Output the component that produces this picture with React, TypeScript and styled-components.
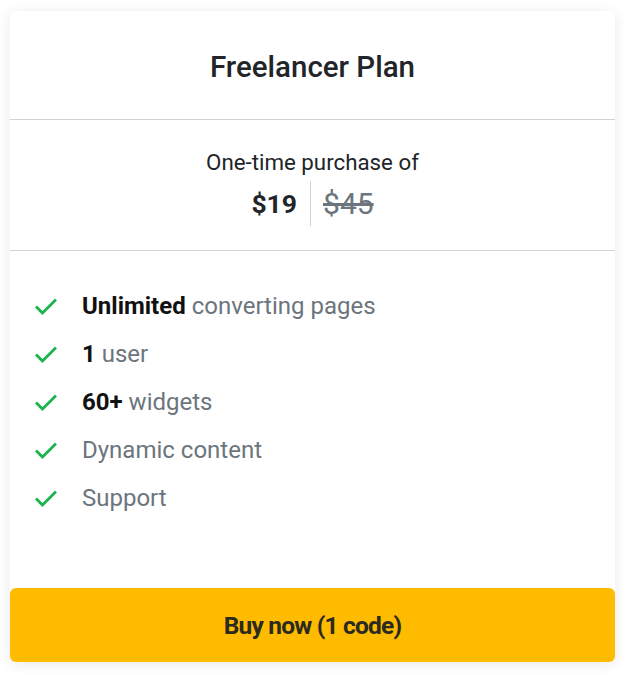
import React from "react";
import styled, { createGlobalStyle } from "styled-components";

const Global = createGlobalStyle`
  html, body { margin: 0; padding: 0; background: #ffffff; }
  body { font-family: Roboto, "Noto Sans", Arial, sans-serif; }
`;

const Page = styled.div`
  padding: 11px 12px 13px 10px;
`;

const Card = styled.div`
  background: #fff;
  border-radius: 6px;
  box-shadow: 0 2px 14px rgba(0, 0, 0, 0.09);
  display: flex;
  flex-direction: column;
  height: 651px;
`;

const Header = styled.div`
  height: 108px;
  display: flex;
  align-items: center;
  justify-content: center;
  border-bottom: 1px solid #d3d3d3;
`;

const Title = styled.h2`
  margin: 0;
  font-size: 29.5px;
  font-weight: 500;
  color: #212529;
  padding-top: 3px;
`;

const PriceBox = styled.div`
  height: 131px;
  display: flex;
  flex-direction: column;
  align-items: center;
  border-bottom: 1px solid #d3d3d3;
  box-sizing: border-box;
  padding-top: 29px;
`;

const Lead = styled.div`
  font-size: 22.3px;
  color: #212529;
  line-height: 26px;
`;

const PriceRow = styled.div`
  display: flex;
  align-items: center;
  margin-top: 6px;
`;

const Current = styled.span`
  font-size: 26.5px;
  font-weight: 700;
  color: #212529;
  padding-right: 13px;
  line-height: 32px;
`;

const Sep = styled.span`
  width: 1px;
  height: 45px;
  background: #d3d3d3;
`;

const Old = styled.s`
  font-size: 30px;
  color: #6c757d;
  padding-left: 12px;
  line-height: 32px;
`;

const List = styled.ul`
  list-style: none;
  margin: 0;
  padding: 39px 0 0 24px;
  display: flex;
  flex-direction: column;
  gap: 16px;
  flex: 1;
`;

const Item = styled.li`
  display: flex;
  align-items: center;
  height: 32px;
  font-size: 24px;
  color: #6c757d;
`;

const Icon = styled.span`
  width: 48px;
  display: flex;
  align-items: center;
`;

const Strong = styled.b`
  font-weight: 700;
  color: #111;
`;

const Button = styled.button`
  border: 0;
  margin: 0;
  height: 74px;
  border-radius: 6px;
  background: #ffbb00;
  color: #2b2a1f;
  font-family: Roboto, Arial, sans-serif;
  font-size: 24.5px;
  font-weight: 700;
  letter-spacing: -0.8px;
  cursor: pointer;
`;

const Check = () => (
  <svg width="24" height="18" viewBox="0 0 24 18">
    <path d="M2 9.5 L8.5 16 L22 2.5" fill="none" stroke="#1db34c" strokeWidth="2.8" />
  </svg>
);

const features: { b?: string; t: string }[] = [
  { b: "Unlimited", t: "converting pages" },
  { b: "1", t: "user" },
  { b: "60+", t: "widgets" },
  { t: "Dynamic content" },
  { t: "Support" },
];

export default function App() {
  return (
    <>
      <Global />
      <Page>
        <Card>
          <Header>
            <Title>Freelancer Plan</Title>
          </Header>
          <PriceBox>
            <Lead>One-time purchase of</Lead>
            <PriceRow>
              <Current>$19</Current>
              <Sep />
              <Old>$45</Old>
            </PriceRow>
          </PriceBox>
          <List>
            {features.map((f, i) => (
              <Item key={i}>
                <Icon>
                  <Check />
                </Icon>
                {f.b && <Strong>{f.b}&nbsp;</Strong>}
                {f.t}
              </Item>
            ))}
          </List>
          <Button>Buy now (1 code)</Button>
        </Card>
      </Page>
    </>
  );
}
